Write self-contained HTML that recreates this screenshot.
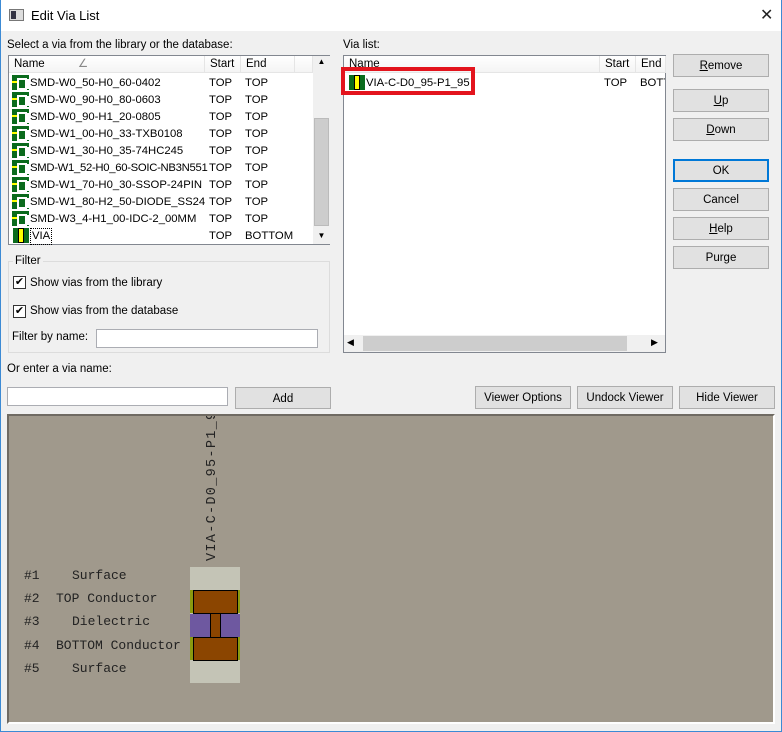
<!DOCTYPE html>
<html><head><style>
*{box-sizing:border-box;margin:0;padding:0}
body{width:782px;height:732px;background:#f0f0f0;font-family:"Liberation Sans",sans-serif;font-size:11.5px;color:#000;position:relative;overflow:hidden}
.a{position:absolute}
.btn{position:absolute;background:#e1e1e1;border:1px solid #adadad;text-align:center;line-height:22px;font-size:11.5px}
.lst{position:absolute;background:#fff;border:1px solid #828790}
.hd{position:absolute;top:0;height:17px;background:#fff;border-right:1px solid #e5e5e5;border-bottom:1px solid #e5e5e5;line-height:17px;padding-left:5px;background:linear-gradient(#fff,#f4f4f4)}
.row{position:absolute;height:17px;line-height:18px;white-space:nowrap;font-size:11.3px}
.ic{position:absolute;left:3px;top:1px;width:17px;height:15px;background:#0a6b1c}
.ic:before{content:"";position:absolute;left:0;top:6px;width:5px;height:2px;background:#ff0}
.ic:after{content:"";position:absolute;left:5px;top:3px;width:6px;height:8px;border:2px solid #fff;background:#0a6b1c;box-shadow:4px 0 0 -1px #fff}
.mono{font-family:"Liberation Mono",monospace;font-size:13px;color:#222;position:absolute}
.chk{position:absolute;width:13px;height:13px;border:1px solid #333;background:#fff;font-size:11px;line-height:11px;text-align:center}
input{position:absolute;border:1px solid #abadb3;background:#fff}
.t{position:absolute;line-height:16px}
</style></head><body>
<div class="a" style="left:0;top:0;width:782px;height:732px;border:1px solid #3c8ad4;border-top:none"></div>
<div class="a" style="left:1px;top:0;width:780px;height:31px;background:#fff"></div>
<div class="a" style="left:9px;top:9px;width:15px;height:12px;border:1px solid #777;background:#ddd"><div style="position:absolute;left:1px;top:1px;width:5px;height:8px;background:#334"></div></div>
<div class="a" style="left:31px;top:8px;font-size:13px">Edit Via List</div>
<div class="a" style="left:760px;top:5px;font-size:16px;font-weight:300;color:#222">✕</div>

<div class="t" style="left:7px;top:37px">Select a via from the library or the database:</div>
<div class="lst" style="left:8px;top:55px;width:322px;height:190px">
 <div class="hd" style="left:0;width:196px">Name <span style="margin-left:30px;color:#888">∠</span></div>
 <div class="hd" style="left:196px;width:36px">Start</div>
 <div class="hd" style="left:232px;width:54px">End</div>
 <div class="hd" style="left:286px;width:18px"></div>
 <div class="a" style="left:304px;top:0;width:17px;height:188px;background:#f0f0f0"><div style="position:absolute;top:1px;width:17px;text-align:center;font-size:8px">▲</div><div style="position:absolute;top:62px;left:1px;width:15px;height:108px;background:#cdcdcd;border:1px solid #bbb"></div><div style="position:absolute;top:175px;width:17px;text-align:center;font-size:8px">▼</div></div>
 <div class="row" style="top:18px"><span class="ic"></span><span style="position:absolute;left:21px">SMD-W0_50-H0_60-0402</span><span style="position:absolute;left:200px">TOP</span><span style="position:absolute;left:236px">TOP</span></div>
 <div class="row" style="top:35px"><span class="ic"></span><span style="position:absolute;left:21px">SMD-W0_90-H0_80-0603</span><span style="position:absolute;left:200px">TOP</span><span style="position:absolute;left:236px">TOP</span></div>
 <div class="row" style="top:52px"><span class="ic"></span><span style="position:absolute;left:21px">SMD-W0_90-H1_20-0805</span><span style="position:absolute;left:200px">TOP</span><span style="position:absolute;left:236px">TOP</span></div>
 <div class="row" style="top:69px"><span class="ic"></span><span style="position:absolute;left:21px">SMD-W1_00-H0_33-TXB0108</span><span style="position:absolute;left:200px">TOP</span><span style="position:absolute;left:236px">TOP</span></div>
 <div class="row" style="top:86px"><span class="ic"></span><span style="position:absolute;left:21px">SMD-W1_30-H0_35-74HC245</span><span style="position:absolute;left:200px">TOP</span><span style="position:absolute;left:236px">TOP</span></div>
 <div class="row" style="top:103px"><span class="ic"></span><span style="position:absolute;left:21px;letter-spacing:-0.3px">SMD-W1_52-H0_60-SOIC-NB3N551</span><span style="position:absolute;left:200px">TOP</span><span style="position:absolute;left:236px">TOP</span></div>
 <div class="row" style="top:120px"><span class="ic"></span><span style="position:absolute;left:21px">SMD-W1_70-H0_30-SSOP-24PIN</span><span style="position:absolute;left:200px">TOP</span><span style="position:absolute;left:236px">TOP</span></div>
 <div class="row" style="top:137px"><span class="ic"></span><span style="position:absolute;left:21px">SMD-W1_80-H2_50-DIODE_SS24</span><span style="position:absolute;left:200px">TOP</span><span style="position:absolute;left:236px">TOP</span></div>
 <div class="row" style="top:154px"><span class="ic"></span><span style="position:absolute;left:21px">SMD-W3_4-H1_00-IDC-2_00MM</span><span style="position:absolute;left:200px">TOP</span><span style="position:absolute;left:236px">TOP</span></div>
 <div class="row" style="top:171px"><span class="a" style="left:4px;top:1px;width:16px;height:15px;background:#0a6b1c"><span class="a" style="left:5px;top:0;width:6px;height:15px;background:#ff0;border:1px solid #000"></span></span><span style="position:absolute;left:21px;border:1px dotted #000;line-height:15px;top:1px;padding:0 1px">VIA</span><span style="position:absolute;left:200px">TOP</span><span style="position:absolute;left:236px">BOTTOM</span></div>
</div>

<div class="a" style="left:8px;top:261px;width:322px;height:92px;border:1px solid #dcdcdc"></div>
<div class="t" style="left:13px;top:253px;background:#f0f0f0;padding:0 2px">Filter</div>
<div class="chk" style="left:13px;top:276px">✔</div><div class="t" style="left:30px;top:275px">Show vias from the library</div>
<div class="chk" style="left:13px;top:305px">✔</div><div class="t" style="left:30px;top:303px">Show vias from the database</div>
<div class="t" style="left:12px;top:329px">Filter by name:</div>
<input style="left:96px;top:329px;width:222px;height:19px">
<div class="t" style="left:7px;top:361px">Or enter a via name:</div>
<input style="left:7px;top:387px;width:221px;height:19px">
<div class="btn" style="left:235px;top:387px;width:96px;height:22px">Add</div>

<div class="t" style="left:343px;top:37px">Via list:</div>
<div class="lst" style="left:343px;top:55px;width:323px;height:298px">
 <div class="hd" style="left:0;width:256px">Name</div>
 <div class="hd" style="left:256px;width:36px">Start</div>
 <div class="hd" style="left:292px;width:30px">End</div>
 <div class="row" style="top:18px;width:321px;overflow:hidden"><span class="a" style="left:5px;top:1px;width:16px;height:15px;background:#0a6b1c"><span class="a" style="left:5px;top:0;width:6px;height:15px;background:#ff0;border:1px solid #000"></span></span><span style="position:absolute;left:22px">VIA-C-D0_95-P1_95</span><span style="position:absolute;left:260px">TOP</span><span style="position:absolute;left:296px">BOTT</span></div>
 <div class="a" style="left:0;top:279px;width:321px;height:17px;background:#f0f0f0"><span class="a" style="left:3px;top:2px;font-size:9px">◀</span><span class="a" style="left:19px;top:1px;width:264px;height:15px;background:#cdcdcd"></span><span class="a" style="left:307px;top:2px;font-size:9px">▶</span></div>
</div>
<div class="a" style="left:341px;top:67px;width:134px;height:28px;border:4px solid #e3141d"></div>

<div class="btn" style="left:673px;top:54px;width:96px;height:23px"><u>R</u>emove</div>
<div class="btn" style="left:673px;top:89px;width:96px;height:23px"><u>U</u>p</div>
<div class="btn" style="left:673px;top:118px;width:96px;height:23px"><u>D</u>own</div>
<div class="btn" style="left:673px;top:159px;width:96px;height:23px;border:1px solid #0078d7;box-shadow:inset 0 0 0 1px #0078d7">OK</div>
<div class="btn" style="left:673px;top:188px;width:96px;height:23px">Cancel</div>
<div class="btn" style="left:673px;top:217px;width:96px;height:23px"><u>H</u>elp</div>
<div class="btn" style="left:673px;top:246px;width:96px;height:23px">Purge</div>

<div class="btn" style="left:475px;top:386px;width:96px;height:23px">Viewer Options</div>
<div class="btn" style="left:577px;top:386px;width:96px;height:23px">Undock Viewer</div>
<div class="btn" style="left:679px;top:386px;width:96px;height:23px">Hide Viewer</div>

<div class="a" style="left:7px;top:414px;width:768px;height:310px;background:#a0998c;border:2px solid #6f6a62;border-right-color:#fff;border-bottom-color:#fff;overflow:hidden">
<div class="a" style="left:196px;top:145px;transform:rotate(-90deg);transform-origin:0 0;font-family:'Liberation Mono',monospace;font-size:13.5px;letter-spacing:1.3px;color:#222;white-space:nowrap">VIA-C-D0_95-P1_95</div>
</div>
<div class="mono" style="left:24px;top:568px">#1</div><div class="mono" style="left:72px;top:568px">Surface</div>
<div class="mono" style="left:24px;top:591px">#2</div><div class="mono" style="left:56px;top:591px">TOP Conductor</div>
<div class="mono" style="left:24px;top:614px">#3</div><div class="mono" style="left:72px;top:614px">Dielectric</div>
<div class="mono" style="left:24px;top:638px">#4</div><div class="mono" style="left:56px;top:638px">BOTTOM Conductor</div>
<div class="mono" style="left:24px;top:661px">#5</div><div class="mono" style="left:72px;top:661px">Surface</div>
<div class="a" style="left:190px;top:567px;width:50px;height:116px;background:#c4c4b6"></div>
<div class="a" style="left:190px;top:590px;width:50px;height:23px;background:#8a9a10"></div>
<div class="a" style="left:190px;top:637px;width:50px;height:23px;background:#8a9a10"></div>
<div class="a" style="left:190px;top:614px;width:50px;height:23px;background:#6e58a0"></div>
<div class="a" style="left:193px;top:590px;width:45px;height:24px;background:#8b4500;border:1px solid #000"></div>
<div class="a" style="left:193px;top:637px;width:45px;height:24px;background:#8b4500;border:1px solid #000"></div>
<div class="a" style="left:210px;top:614px;width:11px;height:23px;background:#8b4500;border:1px solid #000;border-top:none;border-bottom:none"></div>
</body></html>
